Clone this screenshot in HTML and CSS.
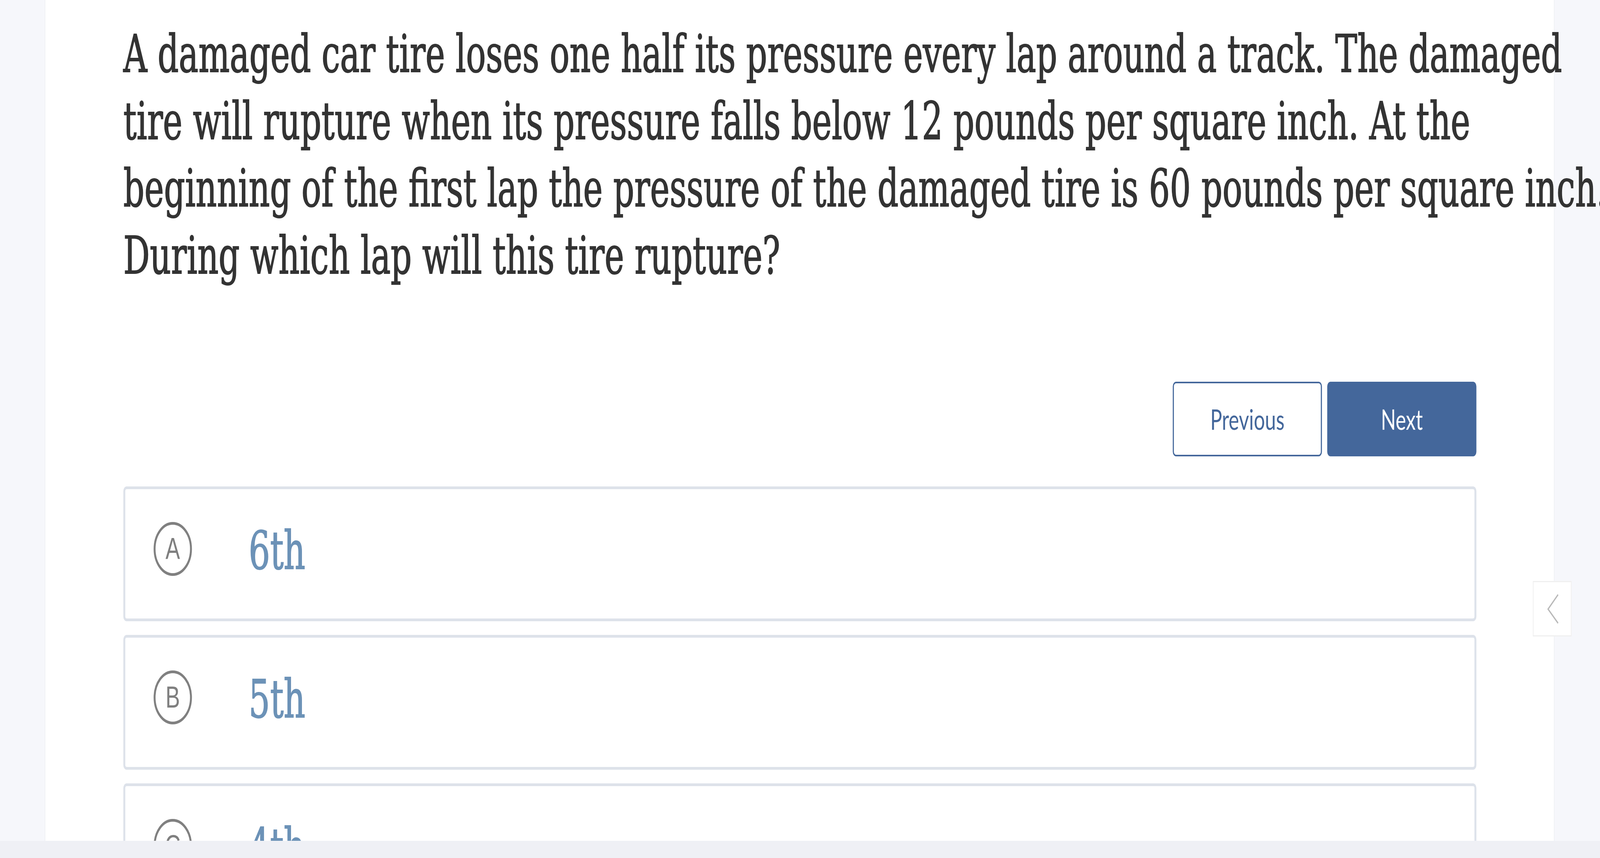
FILE: index.html
```html
<!DOCTYPE html>
<html lang="en">
<head>
  <meta charset="UTF-8">
  <meta name="viewport" content="width=device-width, initial-scale=1.0">
  <title>Question</title>
  <link rel="stylesheet" href="styles.css">
</head>
<body>
  <div class="screen">
    <div class="page">
      <div class="panel">
        <!-- Question -->
        <p class="question">A damaged car tire loses one half its pressure every lap around a track. The damaged<br>tire will rupture when its pressure falls below 12 pounds per square inch. At the<br>beginning of the first lap the pressure of the damaged tire is 60 pounds per square inch.<br>During which lap will this tire rupture?</p>

        <!-- Navigation -->
        <div class="nav-buttons">
          <button class="btn btn-outline">Previous</button>
          <button class="btn btn-primary">Next</button>
        </div>

        <!-- Answer choices -->
        <ul class="choices">
          <li class="choice">
            <span class="choice-letter">A</span>
            <span class="choice-text">6th</span>
          </li>
          <li class="choice">
            <span class="choice-letter">B</span>
            <span class="choice-text">5th</span>
          </li>
          <li class="choice">
            <span class="choice-letter">C</span>
            <span class="choice-text">4th</span>
          </li>
        </ul>
      </div>

      <button class="side-toggle" aria-label="Open sidebar">
        <svg width="134" height="136" viewBox="0 0 134 136">
          <polyline points="88,32 52,69 88,105" fill="none" stroke="#b9b9b9" stroke-width="4"/>
        </svg>
      </button>
    </div>
    <div class="bottom-bar"></div>
  </div>
</body>
</html>
```

FILE: styles.css
```css
html, body {
  margin: 0;
  padding: 0;
  overflow: hidden;
  background-color: #f6f7fb;
}
/* drawn at 5760 wide, squeezed into the 4096px window */
.screen {
  width: 5760px;
  height: 2196px;
  transform: scaleX(0.711111);
  transform-origin: 0 0;
}
.page {
  position: relative;
  height: 2152px;
  overflow: hidden;
}
.panel {
  box-sizing: border-box;
  height: 2152px;
  margin: 0 164px 0 161px;
  padding: 52px 279px 0 281px;
  background: #fff;
  border-left: 2px solid #eceef2;
  border-right: 2px solid #eceef2;
}
.question {
  margin: 0 -445px 0 0;
  font-family: "DejaVu Serif", serif;
  font-stretch: condensed;
  font-size: 132px;
  line-height: 172px;
  color: #333;
  white-space: nowrap;
  -webkit-text-stroke: 2px #333;
}
.nav-buttons {
  display: flex;
  justify-content: flex-end;
  gap: 19px;
  margin-top: 237px;
}
.btn {
  box-sizing: border-box;
  width: 537px;
  height: 191px;
  border-radius: 12px;
  font-family: Lato, "Open Sans", sans-serif;
  font-size: 71px;
  cursor: pointer;
}
.btn-outline {
  background: #fff;
  color: #44679b;
  border: 4px solid #44679b;
}
.btn-primary {
  background: #44679b;
  color: #fff;
  border: none;
}
.choices {
  list-style: none;
  margin: 77px 0 0;
  padding: 0;
}
.choice {
  box-sizing: border-box;
  display: flex;
  align-items: center;
  height: 345px;
  margin-bottom: 35px;
  padding: 0 0 26px 102px;
  border: 7px solid #dde2ea;
  border-radius: 12px;
}
.choice-letter {
  box-sizing: border-box;
  display: flex;
  align-items: center;
  justify-content: center;
  width: 138px;
  height: 138px;
  border: 7px solid #808080;
  border-radius: 50%;
  font-family: "Liberation Sans", Arial, sans-serif;
  font-size: 78px;
  color: #7f7f7f;
}
.choice-text {
  margin-left: 204px;
  margin-top: 10px;
  font-family: "DejaVu Serif", serif;
  font-stretch: condensed;
  font-size: 135px;
  line-height: 1;
  color: #6c92b7;
  -webkit-text-stroke: 2px #6c92b7;
}
.side-toggle {
  position: absolute;
  left: 5518px;
  top: 1487px;
  width: 140px;
  height: 142px;
  padding: 0;
  background: #fff;
  border: 3px solid #f0f0f0;
  cursor: pointer;
}
.side-toggle svg {
  display: block;
}
.bottom-bar {
  height: 44px;
  background: #eff0f5;
}
```
